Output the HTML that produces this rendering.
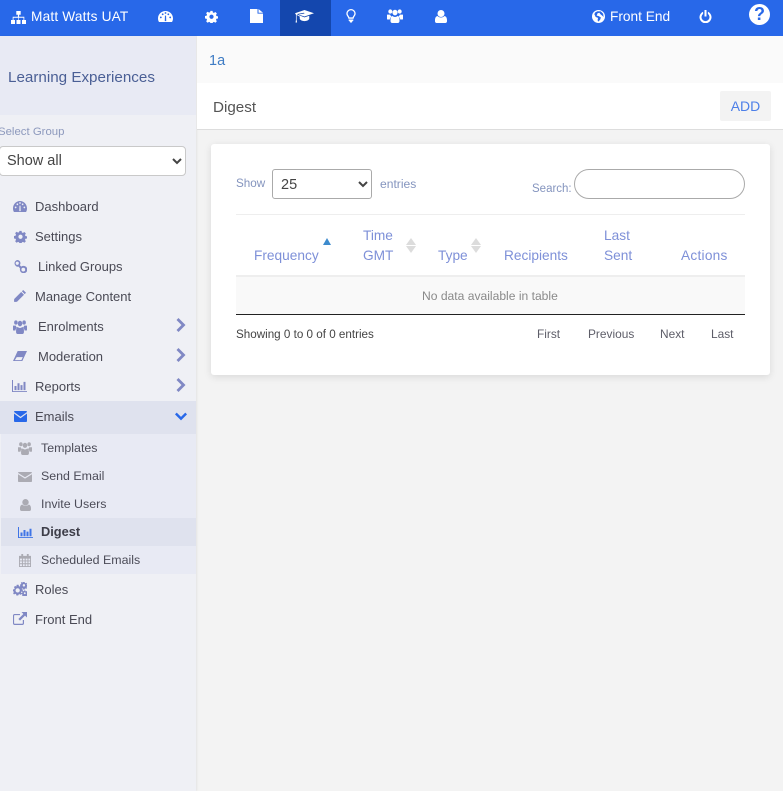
<!DOCTYPE html>
<html><head><meta charset="utf-8"><title>Digest</title>
<style>
html,body{margin:0;padding:0}
body{width:783px;height:791px;overflow:hidden;position:relative;background:#f3f3f3;font-family:"Liberation Sans",sans-serif;font-size:13px;color:#444}
.a{position:absolute;white-space:nowrap;line-height:16px}
svg.i{position:absolute;fill:currentColor;overflow:visible}
.n{color:#4a4a55;font-size:13px}
.m{color:#4c4c58;font-size:12.400px}
.h{color:#7e90d8;font-size:13.700px}
.w{color:#fff;font-size:13.700px}
.s{color:#5d5d68;font-size:11.900px}
.si{color:#8088c4}
.gi{color:#ababb3}
</style></head><body>
<svg width="0" height="0" style="position:absolute">
<defs>
<symbol id="gauge" viewBox="0 2 16 12" preserveAspectRatio="none"><path fill-rule="evenodd" d="M8 2C3.600 2 0 5.600 0 10c0 1.500.4 2.900 1.100 4h13.800c.7-1.100 1.100-2.500 1.100-4 0-4.400-3.600-8-8-8zM3 10a1 1 0 1 1 0-2 1 1 0 0 1 0 2zm2-3.400a1 1 0 1 1 0-2 1 1 0 0 1 0 2zM8 5.200a1 1 0 1 1 0-2 1 1 0 0 1 0 2zm3 1.400a1 1 0 1 1 0-2 1 1 0 0 1 0 2zm2 3.400a1 1 0 1 1 0-2 1 1 0 0 1 0 2zM7.200 13l.2-6h1.200l.2 6z"/></symbol>
<symbol id="gear" viewBox="0 0 16 16"><path fill-rule="evenodd" d="M6.700 1h2.600l.4 2 1.300.6 1.800-1.100 1.800 1.800-1.100 1.800.6 1.300 2 .4v2.600l-2 .4-.6 1.300 1.100 1.800-1.800 1.800-1.800-1.100-1.300.6-.4 2H6.700l-.4-2-1.300-.6-1.800 1.100-1.800-1.800 1.100-1.800-.6-1.300-2-.4V7.400l2-.4.6-1.300-1.100-1.800 1.800-1.800L5 3.200l1.300-.6zM8 5.700a2.600 2.600 0 1 0 0 5.200 2.600 2.600 0 0 0 0-5.200z"/></symbol>
<symbol id="file" viewBox="0 0 13 15" preserveAspectRatio="none"><path d="M0 0h7.500v5H13v10H0zM8.500 0 13 4H8.500z"/></symbol>
<symbol id="cap" viewBox="0 0 20 14" preserveAspectRatio="none"><path d="M10 0 20 3.500 10 7 3.500 4.800 10 3.800 9.500 3 2.500 4.300V5l7.500 3 5-1.800v3c0 1.500-2.500 2.800-5 2.800s-5-1.300-5-2.800v-2L1.700 5.300v5.200l.5 3H.6l.4-3V5L0 3.500z"/></symbol>
<symbol id="bulb" viewBox="0 0 10 15"><path fill-rule="evenodd" d="M5 0a5 5 0 0 1 5 5c0 2-1.500 3-2 4.500-.1.500-.2.800-.2 1H2.200c0-.2-.1-.5-.2-1C1.500 8 0 7 0 5a5 5 0 0 1 5-5zm0 1.400A3.600 3.600 0 0 0 1.400 5c0 1.500 1.400 2.400 1.900 4h3.400c.5-1.600 1.900-2.500 1.900-4A3.600 3.600 0 0 0 5 1.400zM2.500 11.300h5v1.200l-1 .6-.5 1.400H4l-.5-1.400-1-.6z"/></symbol>
<symbol id="users" viewBox="0 0 16 13" preserveAspectRatio="none"><circle cx="3.300" cy="2.300" r="2"/><circle cx="12.700" cy="2.300" r="2"/><circle cx="8" cy="3.300" r="2.600"/><path d="M0 5.200h3.200c.3.800.7 1.400 1.300 1.800-1 .7-1.600 1.700-1.700 2.800H.7C.2 9.800 0 9.400 0 9zM16 5.200h-3.200c-.3.800-.7 1.400-1.300 1.800 1 .7 1.600 1.700 1.700 2.800h2.100c.5 0 .7-.4.7-.8zM5.500 6.500c.7.600 1.500.9 2.500.9s1.800-.3 2.500-.9c1.300.3 2 1.400 2 3.300v1.500c0 1-.8 1.700-1.700 1.700H5.200c-.9 0-1.700-.7-1.700-1.700V9.800c0-1.900.7-3 2-3.300z"/></symbol>
<symbol id="user" viewBox="0 0 12 13"><circle cx="6" cy="3.500" r="3.500"/><path d="M2.500 6c.9 1 2.100 1.500 3.500 1.500S8.600 7 9.500 6C11.200 6.400 12 8 12 10.300v1c0 1-.7 1.700-1.700 1.700H1.700C.7 13 0 12.300 0 11.300v-1C0 8 .8 6.400 2.500 6z"/></symbol>
<symbol id="globe" viewBox="0 0 14 14"><path fill-rule="evenodd" d="M7 0a7 7 0 1 1 0 14A7 7 0 0 1 7 0zM3.500 2.500l-1 2 1.500 3 2.500 1-.5 2.500 1 1.500 2-2.500.5-2-2.500-1.500L5 6 6 3.500l2-.5 1 1.500L11 6l1.500 1.500L12 4 9.500 1.500 6 1.300z"/></symbol>
<symbol id="power" viewBox="0 0 12 13"><path d="M5 0h2v6.500H5zM3.600 1.700v2.200A4 4 0 1 0 8.400 3.900V1.700a6 6 0 1 1-4.800 0z"/></symbol>
<symbol id="org" viewBox="0 0 15 13"><path d="M5.300 0h4.400v3.800H8.100v2h5.200V9H15v4h-4V9h1.500V6.700h-4.700V9H9.500v4h-4V9h1.700V6.700H2.500V9H4v4H0V9h1.700V5.800h5.200v-2H5.300z"/></symbol>
<symbol id="link" viewBox="0 0 14 14"><path fill-rule="evenodd" d="M3.500 0a3.500 3.500 0 0 1 2.800 5.500l1.500 1.700A4 4 0 1 1 6.500 9.200L5 7.200A3.500 3.500 0 1 1 3.500 0zm0 1.800a1.700 1.700 0 1 0 0 3.400 1.700 1.700 0 0 0 0-3.400zm6.500 6.600a2 2 0 1 0 0 4 2 2 0 0 0 0-4z"/></symbol>
<symbol id="pencil" viewBox="0 0 12 12"><path d="M9.200 0 12 2.800l-1.300 1.300-2.800-2.800zM7.200 2 10 4.800 3 11.800.6 12 0 11.400.2 9z"/></symbol>
<symbol id="eraser" viewBox="0 0 15 11" preserveAspectRatio="none"><path fill-rule="evenodd" d="M5 0h10l-5 11H0zM4 6.800 2 10h7l1.500-3.200z"/></symbol>
<symbol id="chart" viewBox="0 0 15 13" preserveAspectRatio="none"><path d="M0 0h1v12h14v1H0zM2.500 6.500h2V11h-2zM5.500 3.500h2V11h-2zM8.500 5.500h2V11h-2zM11.500 2h2v9h-2z"/></symbol>
<symbol id="mail" viewBox="0 0 14 11" preserveAspectRatio="none"><path d="M0 1c0-.6.400-1 1-1h12c.6 0 1 .4 1 1L7 5.800zM0 2.500 7 7.300l7-4.800V10c0 .6-.4 1-1 1H1c-.6 0-1-.4-1-1z"/></symbol>
<symbol id="cal" viewBox="0 0 13 14" preserveAspectRatio="none"><path fill-rule="evenodd" d="M0 2h2.500V0h2v2h4V0h2v2H13v12H0zM1 5v2h2.200V5zm3.200 0v2h2V5zm3 0v2h2V5zm3 0v2H12V5zM1 8v2h2.200V8zm3.200 0v2h2V8zm3 0v2h2V8zm3 0v2H12V8zM1 11v2h2.200v-2zm3.200 0v2h2v-2zm3 0v2h2v-2zm3 0v2H12v-2z"/></symbol>
<symbol id="cogs" viewBox="0 0 15 15"><path fill-rule="evenodd" d="M4 3h2l.3 1.400 1 .4 1.200-.7 1.300 1.300-.8 1.200.5 1L10.500 8v2l-1.500.3-.4 1 .8 1.200-1.300 1.300-1.200-.8-1 .5L5.600 14.500h-2l-.3-1.500-1-.4-1.200.8-1-1.400.8-1.200-.5-1L0 10V8l1.400-.3.400-1L1 5.500 2.300 4.200l1.200.7zm1 3.700a2.300 2.300 0 1 0 0 4.600 2.300 2.300 0 0 0 0-4.600z"/><path fill-rule="evenodd" d="M11 0h1.500l.2 1 .7.300.9-.5.8.9-.5.800.3.700 1 .2v1.300l-1 .2-.3.700.5.800-.9.900-.9-.5-.6.300-.2 1H11l-.2-1-.7-.3-.8.5-.9-.9.5-.8-.3-.7-1-.2V2.600l1-.2.3-.7-.5-.8.900-.9.800.5.700-.3zm.7 2.300a1.300 1.300 0 1 0 0 2.600 1.300 1.300 0 0 0 0-2.600z"/><path fill-rule="evenodd" d="M12 9h1.200l.2.900.6.200.7-.4.800.8-.4.700.2.600.9.200V13l-.9.200-.2.600.4.700-.8.800-.7-.4-.6.200-.2.900H12l-.2-.9-.6-.2-.7.400-.8-.8.400-.7-.2-.6-.9-.2v-1.200l.9-.2.200-.6-.4-.7.800-.8.700.4.600-.2zm.6 2a1 1 0 1 0 0 2 1 1 0 0 0 0-2z"/></symbol>
<symbol id="ext" viewBox="0 0 14 13"><path d="M1.500 2H7v1.100H1.800c-.4 0-.7.300-.7.700v7.300c0 .4.300.7.700.7h7.300c.4 0 .7-.3.700-.7V8H11v3.400c0 .9-.7 1.600-1.600 1.600H1.600C.7 13 0 12.300 0 11.400V3.600C0 2.700.7 2 1.500 2z"/><path d="M8.500 0H14v5.500L12 3.600 7 8.600 5.400 7l5-5z"/></symbol>
<symbol id="chev" viewBox="0 0 10 14"><path d="M2.500 0 9.500 7l-7 7L.5 12l5-5-5-5z"/></symbol>
<symbol id="chevd" viewBox="0 0 14 10"><path d="M0 2.500 2 .5l5 5 5-5 2 2-7 7z"/></symbol>
</defs></svg>

<!-- top bar -->
<div style="position:absolute;left:0;top:0;width:783px;height:36px;background:#2868e9"></div>
<div style="position:absolute;left:280px;top:0;width:51px;height:36px;background:#1447ae"></div>
<svg class="i" style="left:11px;top:11px;color:#fff" width="15" height="13"><use href="#org"/></svg>
<span class="a w" style="left:31px;top:9px;letter-spacing:.17px">Matt Watts UAT</span>
<svg class="i" style="left:158px;top:11px;color:#fff" width="15" height="11"><use href="#gauge"/></svg>
<svg class="i" style="left:205px;top:10px;color:#fff" width="13" height="13"><use href="#gear"/></svg>
<svg class="i" style="left:250px;top:9px;color:#fff" width="13" height="14"><use href="#file"/></svg>
<svg class="i" style="left:295px;top:10px;color:#fff" width="19" height="13"><use href="#cap"/></svg>
<svg class="i" style="left:346px;top:9px;color:#fff" width="10" height="14"><use href="#bulb"/></svg>
<svg class="i" style="left:387px;top:9px;color:#fff" width="16" height="14"><use href="#users"/></svg>
<svg class="i" style="left:435px;top:10px;color:#fff" width="12" height="13"><use href="#user"/></svg>
<svg class="i" style="left:592px;top:10px;color:#fff" width="13" height="13"><use href="#globe"/></svg>
<span class="a w" style="left:610px;top:9px">Front End</span>
<svg class="i" style="left:699px;top:10px;color:#fff" width="13" height="13"><use href="#power"/></svg>
<div style="position:absolute;left:749px;top:4px;width:21px;height:21px;border-radius:50%;background:#fff;color:#2868e9;font:bold 18px/21px 'Liberation Sans',sans-serif;text-align:center">?</div>

<!-- sidebar -->
<div style="position:absolute;left:0;top:36px;width:196px;height:755px;background:#eff0f5;box-shadow:1px 0 2px rgba(0,0,0,.07)"></div>
<div style="position:absolute;left:0;top:36px;width:196px;height:79px;background:#e8eaf4"></div>
<span class="a" style="left:8px;top:70px;font-size:15.200px;color:#4a5f95">Learning Experiences</span>
<span class="a" style="left:-2px;top:124px;font-size:11.400px;color:#8d99bd">Select Group</span>
<select style="position:absolute;left:-1px;top:146px;width:187px;height:30px;box-sizing:border-box;background:#fff;border:1px solid #c9c9c9;border-radius:4px;font:14.500px 'Liberation Sans',sans-serif;color:#444;padding-left:3px"><option>Show all</option></select>

<div style="position:absolute;left:0;top:401px;width:196px;height:33px;background:#dfe2ee"></div>
<div style="position:absolute;left:1px;top:434px;width:195px;height:140px;background:#e8eaf4"></div>
<div style="position:absolute;left:1px;top:518px;width:195px;height:28px;background:#dfe2ee"></div>

<svg class="i si" style="left:13px;top:201px" width="14" height="11"><use href="#gauge"/></svg>
<span class="a n" style="left:35px;top:199px">Dashboard</span>
<svg class="i si" style="left:14px;top:230px" width="13" height="13"><use href="#gear"/></svg>
<span class="a n" style="left:35px;top:229px">Settings</span>
<svg class="i si" style="left:14px;top:260px" width="13" height="13"><use href="#link"/></svg>
<span class="a n" style="left:38px;top:259px">Linked Groups</span>
<svg class="i si" style="left:14px;top:290px" width="12" height="12"><use href="#pencil"/></svg>
<span class="a n" style="left:35px;top:289px">Manage Content</span>
<svg class="i si" style="left:13px;top:320px" width="14" height="14"><use href="#users"/></svg>
<span class="a n" style="left:38px;top:319px">Enrolments</span>
<svg class="i si" style="left:176px;top:318px" width="10" height="14"><use href="#chev"/></svg>
<svg class="i si" style="left:13px;top:351px" width="14" height="10"><use href="#eraser"/></svg>
<span class="a n" style="left:38px;top:349px">Moderation</span>
<svg class="i si" style="left:176px;top:348px" width="10" height="14"><use href="#chev"/></svg>
<svg class="i si" style="left:12px;top:380px" width="15" height="12"><use href="#chart"/></svg>
<span class="a n" style="left:35px;top:379px">Reports</span>
<svg class="i si" style="left:176px;top:378px" width="10" height="14"><use href="#chev"/></svg>
<svg class="i" style="left:14px;top:411px;color:#2868e9" width="13" height="11"><use href="#mail"/></svg>
<span class="a n" style="left:35px;top:409px">Emails</span>
<svg class="i" style="left:175px;top:412px;color:#2868e9" width="12" height="9"><use href="#chevd"/></svg>

<svg class="i gi" style="left:18px;top:442px" width="14" height="13"><use href="#users"/></svg>
<span class="a m" style="left:41px;top:440px">Templates</span>
<svg class="i gi" style="left:18px;top:472px" width="14" height="10"><use href="#mail"/></svg>
<span class="a m" style="left:41px;top:468px">Send Email</span>
<svg class="i gi" style="left:20px;top:499px" width="11" height="12"><use href="#user"/></svg>
<span class="a m" style="left:41px;top:496px">Invite Users</span>
<svg class="i" style="left:18px;top:527px;color:#3f74e6" width="15" height="11"><use href="#chart"/></svg>
<span class="a m" style="left:41px;top:524px;font-weight:bold;color:#3d3d48;font-size:12.800px">Digest</span>
<svg class="i gi" style="left:19px;top:554px" width="12" height="13"><use href="#cal"/></svg>
<span class="a m" style="left:41px;top:552px">Scheduled Emails</span>

<svg class="i si" style="left:13px;top:582px" width="14" height="14"><use href="#cogs"/></svg>
<span class="a n" style="left:35px;top:582px">Roles</span>
<svg class="i si" style="left:13px;top:612px" width="14" height="13"><use href="#ext"/></svg>
<span class="a n" style="left:35px;top:612px">Front End</span>

<!-- header bars -->
<div style="position:absolute;left:197px;top:36px;width:586px;height:47px;background:#fafafa"></div>
<span class="a" style="left:209px;top:53px;font-size:14.500px;color:#3f7cc4">1a</span>
<div style="position:absolute;left:197px;top:83px;width:586px;height:46px;background:#fff;border-bottom:1px solid #ddd"></div>
<span class="a" style="left:213px;top:100px;font-size:15.200px;color:#555">Digest</span>
<div style="position:absolute;left:720px;top:91px;width:51px;height:30px;background:#f3f3f3;border-radius:2px;color:#4d7fe8;font-size:14px;line-height:30px;text-align:center">ADD</div>

<!-- card -->
<div style="position:absolute;left:211px;top:144px;width:559px;height:231px;background:#fff;border-radius:3px;box-shadow:0 2px 8px rgba(0,0,0,.11)"></div>
<span class="a" style="left:236px;top:176px;font-size:11.700px;color:#8494be">Show</span>
<select style="position:absolute;left:272px;top:169px;width:100px;height:30px;box-sizing:border-box;background:#fff;border:1px solid #aaa;border-radius:3px;font:14.500px 'Liberation Sans',sans-serif;color:#444;padding:1px 0 0 4px"><option>25</option></select>
<span class="a" style="left:380px;top:176px;font-size:12.100px;color:#8494be">entries</span>
<span class="a" style="left:532px;top:181px;font-size:11.500px;color:#8494be">Search:</span>
<div style="position:absolute;left:574px;top:169px;width:171px;height:30px;box-sizing:border-box;border:1px solid #aaa;border-radius:15px;background:#fff"></div>
<div style="position:absolute;left:236px;top:214px;width:509px;height:1px;background:#eee"></div>

<span class="a h" style="left:254px;top:248px">Frequency</span>
<div style="position:absolute;left:323px;top:238px;width:0;height:0;border:4.500px solid transparent;border-top:0;border-bottom:7px solid #3d8bcd"></div>
<span class="a h" style="left:363px;top:228px">Time</span>
<span class="a h" style="left:363px;top:248px">GMT</span>
<div style="position:absolute;left:406px;top:238px;width:0;height:0;border:5px solid transparent;border-top:0;border-bottom:7px solid #dcdcdc"></div>
<div style="position:absolute;left:406px;top:246px;width:0;height:0;border:5px solid transparent;border-bottom:0;border-top:7px solid #dcdcdc"></div>
<span class="a h" style="left:438px;top:248px">Type</span>
<div style="position:absolute;left:471px;top:238px;width:0;height:0;border:5px solid transparent;border-top:0;border-bottom:7px solid #dcdcdc"></div>
<div style="position:absolute;left:471px;top:246px;width:0;height:0;border:5px solid transparent;border-bottom:0;border-top:7px solid #dcdcdc"></div>
<span class="a h" style="left:504px;top:248px">Recipients</span>
<span class="a h" style="left:604px;top:228px">Last</span>
<span class="a h" style="left:604px;top:248px">Sent</span>
<span class="a h" style="left:681px;top:248px;letter-spacing:.25px">Actions</span>

<div style="position:absolute;left:236px;top:275px;width:509px;height:2px;background:#eee"></div>
<div style="position:absolute;left:236px;top:277px;width:509px;height:37px;background:#f9f9f9"></div>
<div style="position:absolute;left:236px;top:314px;width:509px;height:1px;background:#222"></div>
<span class="a" style="left:422px;top:288px;font-size:12.100px;color:#8a8a8a">No data available in table</span>
<span class="a" style="left:236px;top:327px;font-size:11.650px;color:#444">Showing 0 to 0 of 0 entries</span>
<span class="a s" style="left:537px;top:326px">First</span>
<span class="a s" style="left:588px;top:326px">Previous</span>
<span class="a s" style="left:660px;top:326px">Next</span>
<span class="a s" style="left:711px;top:326px">Last</span>
</body></html>
